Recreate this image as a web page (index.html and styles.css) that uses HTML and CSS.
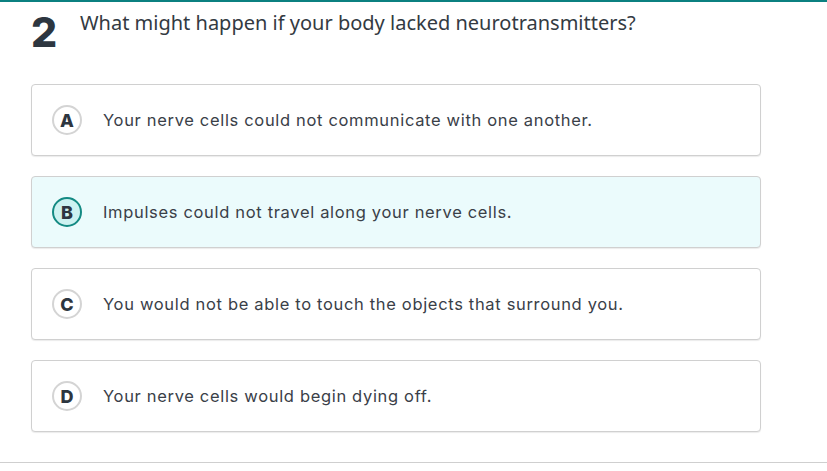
FILE: index.html
```html
<!DOCTYPE html>
<html>
<head>
<meta charset="utf-8">
<link rel="stylesheet" href="styles.css">
</head>
<body>
<div class="page">
  <div class="question">
    <div class="qnum">2</div>
    <div class="qtext">What might happen if your body lacked neurotransmitters?</div>
  </div>
  <div class="options">
    <div class="option">
      <span class="badge">A</span>
      <span class="otext">Your nerve cells could not communicate with one another.</span>
    </div>
    <div class="option selected">
      <span class="badge">B</span>
      <span class="otext">Impulses could not travel along your nerve cells.</span>
    </div>
    <div class="option">
      <span class="badge">C</span>
      <span class="otext">You would not be able to touch the objects that surround you.</span>
    </div>
    <div class="option">
      <span class="badge">D</span>
      <span class="otext">Your nerve cells would begin dying off.</span>
    </div>
  </div>
</div>
</body>
</html>
```
FILE: styles.css
```css
html, body {
  margin: 0;
  padding: 0;
  background: #fff;
}
.page {
  width: 827px;
  height: 471px;
  box-sizing: border-box;
  border-top: 2px solid #0b8080;
  font-family: "Open Sans", "Noto Sans", sans-serif;
  color: #333a42;
}
.question {
  display: flex;
  align-items: flex-start;
  padding: 8px 0 0 31px;
  height: 74px;
  box-sizing: border-box;
}
.qnum {
  font-family: "Inter", sans-serif;
  font-weight: 800;
  font-size: 41px;
  line-height: 48px;
  color: #2d3640;
  width: 49px;
  margin-top: -2px;
}
.qtext {
  font-family: "Noto Sans", sans-serif;
  font-size: 20px;
  line-height: 26px;
  color: #333a42;
}
.options {
  display: flex;
  flex-direction: column;
  gap: 20px;
  padding: 8px 0 30px 31px;
  border-bottom: 1px solid #cfcfcf;
}
.option {
  width: 730px;
  height: 72px;
  box-sizing: border-box;
  border: 1px solid #d0d0d0;
  border-radius: 4px;
  box-shadow: 0 1px 1px rgba(0,0,0,0.08);
  display: flex;
  align-items: center;
  padding-left: 20px;
  background: #fff;
}
.option.selected {
  background: #ebfbfc;
}
.badge {
  width: 30px;
  height: 30px;
  box-sizing: border-box;
  border: 2px solid #d4d4d4;
  border-radius: 50%;
  display: flex;
  align-items: center;
  justify-content: center;
  font-family: "Inter", sans-serif;
  font-weight: 800;
  font-size: 18px;
  color: #2d3640;
  background: #fff;
  margin-right: 21px;
}
.selected .badge {
  border-color: #138a83;
  background: #cdf2f1;
}
.otext {
  font-family: "Inter", sans-serif;
  font-size: 16.5px;
  color: #3a4048;
  letter-spacing: 0.67px;
}
```
